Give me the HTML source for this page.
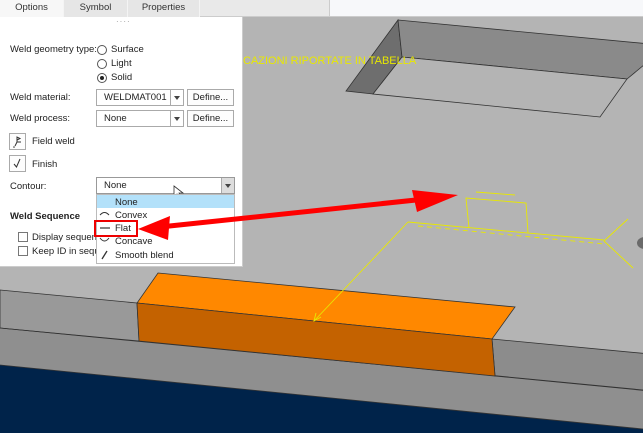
<!DOCTYPE html>
<html><head><style>
*{margin:0;padding:0;box-sizing:border-box}
body{width:643px;height:433px;overflow:hidden;position:relative;font-family:"Liberation Sans",sans-serif;font-size:9.5px;color:#222;background:#b4b4b4}
.a{position:absolute;white-space:nowrap}
.tab{position:absolute;top:0;height:17px;text-align:center;line-height:16px;font-size:9.5px;color:#333;background:#e6e6e6;border-right:1px solid #f4f4f4}
.rad{position:absolute;width:10px;height:10px;border:1px solid #555;border-radius:50%;background:#fff}
.cb{position:absolute;width:10px;height:10px;border:1px solid #777;background:#fff}
.combo{position:absolute;border:1px solid #aaa;background:#fff;height:17px;line-height:15px;padding-left:7px}
.btn{position:absolute;border:1px solid #aaa;background:#fdfdfd;height:17px;line-height:15px;text-align:center}
.arr{position:absolute;right:0;top:0;width:13px;height:15px;border-left:1px solid #aaa}
.arr:after{content:"";position:absolute;left:3px;top:6px;border:3px solid transparent;border-top:4px solid #444}
</style></head><body>
<svg class="a" style="left:0;top:0" width="643" height="433">
<rect x="0" y="17" width="643" height="416" fill="#b4b4b4"/>
<polygon points="398,20 402,57 373,94 346,91" fill="#6e6e6e" stroke="#333" stroke-width="0.8"/>
<polygon points="398,20 650,44 650,60 627,79 402,57" fill="#8a8a8a" stroke="#333" stroke-width="0.8"/>
<polygon points="402,57 627,79 600,117 373,94" fill="#b4b4b4" stroke="#333" stroke-width="0.8"/>
<polygon points="0,328 643,390 643,433 0,433" fill="#8f8f8f"/>
<polygon points="0,365 643,429 643,433 0,433" fill="#00234a"/>
<line x1="0" y1="365" x2="643" y2="429" stroke="#333" stroke-width="0.8"/>
<polygon points="0,290 137,303 139,341 0,328" fill="#999" stroke="#333" stroke-width="0.8"/>
<polygon points="492,339 650,354 650,391 495,376" fill="#8c8c8c" stroke="#333" stroke-width="0.8"/>
<line x1="0" y1="328" x2="643" y2="390" stroke="#333" stroke-width="0.8"/>
<polygon points="158,273 515,307 492,339 137,303" fill="#ff8800" stroke="#333" stroke-width="0.8"/>
<polygon points="137,303 492,339 495,376 139,341" fill="#c46200" stroke="#333" stroke-width="0.8"/>
<ellipse cx="645" cy="243" rx="8" ry="6" fill="#6a6a6a"/>
<g stroke="#e8e800" stroke-width="0.9" fill="none">
<line x1="408" y1="222" x2="604" y2="240"/>
<line x1="418" y1="226" x2="604" y2="244" stroke-dasharray="5,4"/>
<polyline points="469,228 466,198 526,203 528,233"/>
<line x1="476" y1="192" x2="515" y2="195"/>
<line x1="604" y1="241" x2="628" y2="219"/>
<line x1="604" y1="241" x2="633" y2="268"/>
<line x1="408" y1="222" x2="314" y2="321"/>
<polyline points="316,313 314,321 321,317"/>
</g>
<text x="243" y="64" fill="#e8e800" font-family="Liberation Sans" font-size="11">CAZIONI RIPORTATE IN TABELLA</text>
</svg>
<div class="a" style="left:0;top:0;width:643px;height:17px;background:#f7f8fa;border-bottom:1px solid #ccc"></div>
<div class="a" style="left:200px;top:0;width:130px;height:16px;background:#e9e9e9;border-right:1px solid #ccc"></div>
<div class="tab" style="left:0;width:64px;background:#f7f7f7">Options</div>
<div class="tab" style="left:64px;width:64px">Symbol</div>
<div class="tab" style="left:128px;width:72px">Properties</div>
<div class="a" style="left:0;top:17px;width:243px;height:250px;background:#fff;border-right:1px solid #ccc;border-bottom:1px solid #ccc"></div>
<div class="a" style="left:116px;top:17px;color:#999;font-size:8px;letter-spacing:1px">····</div>
<div class="a" style="left:10px;top:44px">Weld geometry type:</div>
<div class="rad" style="left:97px;top:45px"></div><div class="a" style="left:111px;top:44px">Surface</div>
<div class="rad" style="left:97px;top:59px"></div><div class="a" style="left:111px;top:58px">Light</div>
<div class="rad" style="left:97px;top:73px"></div><div class="a" style="left:100px;top:76px;width:4px;height:4px;border-radius:50%;background:#222"></div><div class="a" style="left:111px;top:72px">Solid</div>
<div class="a" style="left:10px;top:92px">Weld material:</div>
<div class="combo" style="left:96px;top:89px;width:88px">WELDMAT001<div class="arr"></div></div>
<div class="btn" style="left:187px;top:89px;width:47px">Define...</div>
<div class="a" style="left:10px;top:113px">Weld process:</div>
<div class="combo" style="left:96px;top:110px;width:88px">None<div class="arr"></div></div>
<div class="btn" style="left:187px;top:110px;width:47px">Define...</div>
<div class="btn" style="left:9px;top:133px;width:17px;height:17px"><svg width="15" height="15" style="position:absolute;left:0;top:0"><path d="M5 12 L7 8 L11 8 M7 8 L7 3 L10 4.5 L7 6" stroke="#333" fill="none" stroke-width="1"/><circle cx="4" cy="13" r="0.8" fill="#333"/></svg></div>
<div class="a" style="left:32px;top:136px">Field weld</div>
<div class="btn" style="left:9px;top:155px;width:17px;height:17px"><svg width="15" height="15" style="position:absolute;left:0;top:0"><path d="M4 8 L6.5 11 L10 3" stroke="#333" fill="none" stroke-width="1"/></svg></div>
<div class="a" style="left:32px;top:159px">Finish</div>
<div class="a" style="left:10px;top:181px">Contour:</div>
<div class="combo" style="left:96px;top:177px;width:139px;border-color:#999">None<div class="arr" style="background:#ddd"></div></div>
<svg class="a" style="left:173px;top:185px" width="12" height="16"><path d="M1 1 L1 12 L4 9 L6 14 L8 13 L6 8 L10 8 Z" fill="#fff" stroke="#333" stroke-width="0.8"/></svg>
<div class="a" style="left:10px;top:211px;font-weight:bold;font-size:9.5px">Weld Sequence</div>
<div class="cb" style="left:18px;top:232px"></div><div class="a" style="left:32px;top:232px">Display sequence</div>
<div class="cb" style="left:18px;top:246px"></div><div class="a" style="left:32px;top:246px">Keep ID in seque</div>
<div class="a" style="left:96px;top:194px;width:139px;height:70px;background:#fff;border:1px solid #bbb"></div>
<div class="a" style="left:97px;top:195px;width:137px;height:13px;background:#b3e1fa"></div>
<div class="a" style="left:115px;top:197px">None</div>
<svg class="a" style="left:97px;top:208px" width="16" height="56"><path d="M3 7 Q7.5 2 12 7" stroke="#333" fill="none"/><line x1="3" y1="20" x2="13" y2="20" stroke="#333" stroke-width="1.2"/><path d="M3 30 Q7.5 36 12 30" stroke="#333" fill="none"/><line x1="5" y1="51" x2="10" y2="43" stroke="#333" stroke-width="1.3"/></svg>
<div class="a" style="left:115px;top:210px">Convex</div>
<div class="a" style="left:115px;top:223px">Flat</div>
<div class="a" style="left:115px;top:236px">Concave</div>
<div class="a" style="left:115px;top:250px">Smooth blend</div>
<div class="a" style="left:94px;top:220px;width:44px;height:17px;border:2px solid #e00"></div>
<svg class="a" style="left:0;top:0" width="643" height="433">
<line x1="160" y1="227" x2="435" y2="198" stroke="#f00" stroke-width="5"/>
<polygon points="138,229 170,216 168,240" fill="#f00"/>
<polygon points="458,195 412,190 417,212" fill="#f00"/>
</svg>
</body></html>
